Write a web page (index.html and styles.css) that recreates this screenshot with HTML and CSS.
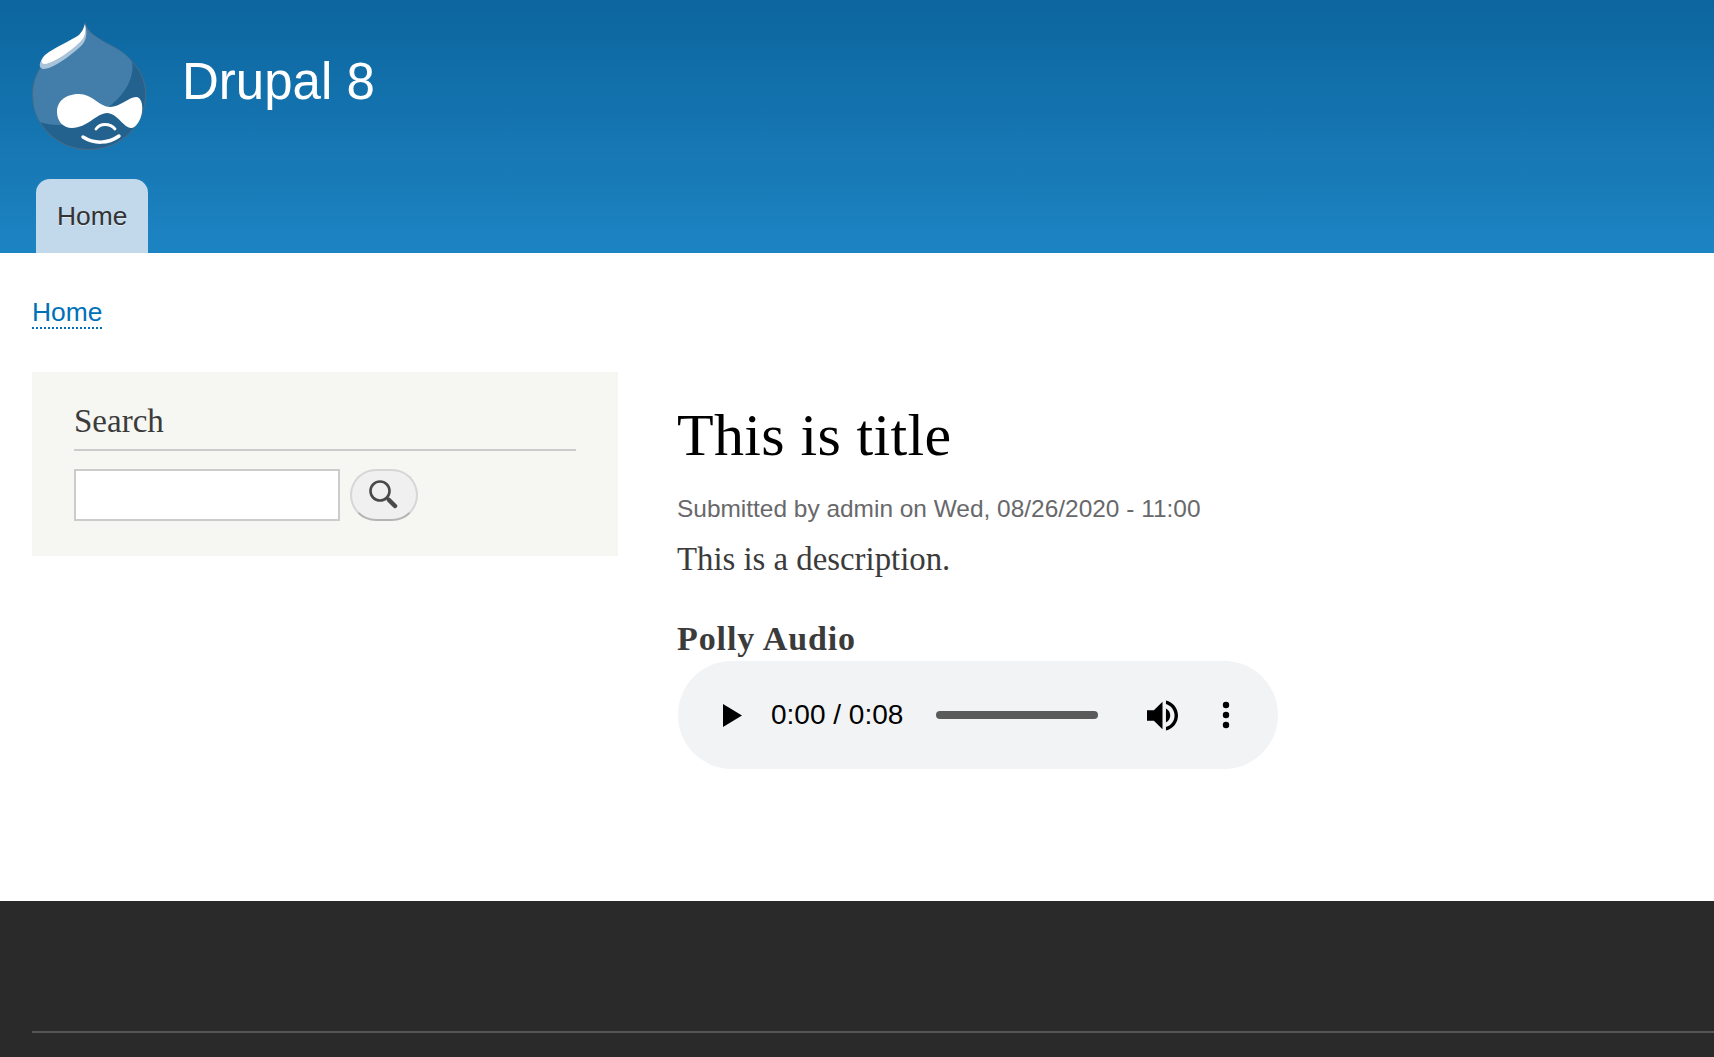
FILE: index.html
```html
<!DOCTYPE html>
<html lang="en">
<head>
<meta charset="utf-8">
<title>Drupal 8</title>
<link rel="stylesheet" href="styles.css">
</head>
<body>
<header class="site-header">
  <div class="branding">
    <svg class="logo" viewBox="0 0 114 128" width="114" height="128" aria-hidden="true">
      <path class="drop-dark" d="M53 1C55 10 66 17 78 23C98 33 113.500 50 113.500 72C113.500 103 89 127.500 57 127.500C25 127.500 .5 103 .5 72C.5 48 17 34 33 24C43 18 51 12 53 1Z"/>
      <path class="drop-light" d="M53 2C55 10 66 17 78 23C88 28 95 33 100 40C103 56 92 73 78 84C60 99 30 108 8 100C2 90 1 80 1 72C1 48 17 34 33 24C43 18 51 12 53 2Z"/>
      <path class="shine-back" d="M53 3C56 12 54 20 48 25C38 34 22 46 12 47C6 47 7 40 11 36C22 27 40 20 47 14C50 11 52 7 53 3Z"/>
      <path class="shine" d="M53 2C54 9 53 16 48 20C40 28 22 41 13 42C8 42 9 37 13 33C23 25 40 18 47 13C50 10 52 6 53 2Z"/>
      <path class="face" d="M25 90C25 78 35 72 47 72C60 72 68 85 78 85C88 85 97 75 104 75C109 75 111 82 110 90C109 98 104 106 99 106C92 106 85 91 75 91C65 91 55 106 40 106C31 106 25 99 25 90Z"/>
      <path class="mouth" d="M51 115C62 122 76 122 87 114"/>
      <path class="mouth-small" d="M64 107C68 101 78 101 83 107"/>
    </svg>
    <div class="site-name">Drupal 8</div>
  </div>
  <nav class="main-nav"><a class="tab" href="#">Home</a></nav>
</header>

<main class="page">
  <div class="breadcrumb"><a href="#">Home</a></div>
  <div class="columns">
    <aside class="sidebar">
      <h2 class="block-title">Search</h2>
      <form class="search-form">
        <input class="search-input" type="search" aria-label="Search">
        <button class="search-button" type="button" aria-label="Search">
          <svg viewBox="0 0 30 30" width="30" height="30" aria-hidden="true">
            <circle class="lens" cx="12" cy="12" r="9.500"/>
            <path class="handle-thin" d="M19 19L22 22"/>
            <path class="handle" d="M21 21L27 27"/>
          </svg>
        </button>
      </form>
    </aside>
    <article class="content">
      <h1 class="title">This is title</h1>
      <div class="meta">Submitted by admin on Wed, 08/26/2020 - 11:00</div>
      <p class="description">This is a description.</p>
      <div class="field-label">Polly Audio</div>
      <div class="player">
        <svg class="play" viewBox="0 0 19 23" width="19" height="23" aria-hidden="true"><path d="M0 0L19 11.500L0 23Z"/></svg>
        <span class="time">0:00 / 0:08</span>
        <div class="track"></div>
        <svg class="volume" viewBox="3 3 18 18" width="31" height="31" aria-hidden="true"><path d="M3 9v6h4l5 5V4L7 9H3zm13.500 3c0-1.770-1.020-3.290-2.500-4.030v8.050c1.480-.730 2.500-2.250 2.500-4.020zM14 3.230v2.060c2.890.860 5 3.540 5 6.710s-2.110 5.850-5 6.710v2.060c4.010-.910 7-4.490 7-8.770s-2.990-7.860-7-8.770z"/></svg>
        <svg class="more" viewBox="0 0 8 28" width="8" height="28" aria-hidden="true"><circle cx="4" cy="4" r="3.200"/><circle cx="4" cy="14" r="3.200"/><circle cx="4" cy="24" r="3.200"/></svg>
      </div>
    </article>
  </div>
</main>

<footer class="site-footer"><div class="footer-rule"></div></footer>
</body>
</html>
```
FILE: styles.css
```css
* { box-sizing: border-box; }

body {
  margin: 0;
  background: #fff;
  color: #3b3b3b;
  font-family: "Liberation Serif", serif;
}

.site-header {
  height: 253px;
  padding-top: 22px;
  background: linear-gradient(to bottom, #0c659e, #1d84c3);
}

.branding {
  display: flex;
  align-items: flex-start;
  padding-left: 32px;
}

.logo { display: block; flex: none; }
.drop-dark { fill: #23628f; stroke: #4d6b82; stroke-width: 1; }
.drop-light { fill: #437da9; }
.shine-back { fill: #a9c4da; }
.shine { fill: #fff; }
.face { fill: #fff; }
.mouth { fill: none; stroke: #fff; stroke-width: 3.500; stroke-linecap: round; }
.mouth-small { fill: none; stroke: #fff; stroke-width: 2.800; stroke-linecap: round; }

.site-name {
  margin: 30px 0 0 36px;
  color: #fff;
  font: 51px/60px "Liberation Sans", Arial, sans-serif;
}

.main-nav {
  display: flex;
  margin: 29px 0 0 36px;
}

.tab {
  display: block;
  height: 74px;
  padding: 0 21px;
  border-radius: 14px 14px 0 0;
  background: #c2d9ec;
  color: #333;
  font: 26.400px/74px "Liberation Sans", Arial, sans-serif;
  text-decoration: none;
  text-shadow: 0 1px 0 rgba(255, 255, 255, .5);
}

.page { padding: 43px 0 132px 32px; }

.breadcrumb {
  height: 32px;
  margin-bottom: 44px;
  font: 26.400px/32px "Liberation Sans", Arial, sans-serif;
}

.breadcrumb a {
  border-bottom: 2px dotted #0071b8;
  color: #0071b8;
  text-decoration: none;
}

.columns {
  display: flex;
  align-items: flex-start;
  gap: 59px;
}

.sidebar {
  flex: none;
  width: 586px;
  padding: 29px 42px 35px;
  background: #f6f6f2;
}

.block-title {
  margin: 0 0 18px;
  padding-bottom: 8px;
  border-bottom: 2px solid #ccc;
  font-size: 33px;
  font-weight: 400;
  line-height: 40px;
}

.search-form {
  display: flex;
  gap: 10px;
}

.search-input {
  width: 266px;
  height: 52px;
  padding: 0 8px;
  border: 2px solid #ccc;
  background: #fff;
  border-radius: 0;
  outline: none;
}

.search-button {
  display: flex;
  align-items: center;
  justify-content: center;
  width: 68px;
  height: 52px;
  padding: 0 2px 2px 0;
  border: 2px solid #d6d6d6;
  border-bottom-color: #b4b4b4;
  border-radius: 26px;
  background: #f0f0f0;
}

.lens { fill: none; stroke: #4a4a4a; stroke-width: 2.600; }
.handle-thin { fill: none; stroke: #4a4a4a; stroke-width: 2; }
.handle { fill: none; stroke: #4a4a4a; stroke-width: 4.500; stroke-linecap: round; }

.content { padding-top: 27px; }

.title {
  margin: 0 0 22px;
  color: #000;
  font-size: 60px;
  font-weight: 400;
  line-height: 72px;
  letter-spacing: .35px;
}

.meta {
  margin-bottom: 14px;
  color: #68686b;
  font: 24.450px/32px "Liberation Sans", Arial, sans-serif;
}

.description {
  margin: 0 0 40px;
  font-size: 32.800px;
  line-height: 40px;
}

.field-label {
  margin-bottom: 2px;
  font-size: 34px;
  font-weight: 700;
  line-height: 40px;
  letter-spacing: .9px;
}

.player {
  display: flex;
  align-items: center;
  width: 600px;
  height: 108px;
  margin-left: 1px;
  padding-left: 45px;
  border-radius: 54px;
  background: #f1f3f4;
  color: #000;
}

.play { display: block; flex: none; }

.time {
  margin-left: 29px;
  font: 28px/32px "Liberation Sans", Arial, sans-serif;
}

.track {
  flex: none;
  width: 162px;
  height: 8px;
  margin-left: 33px;
  border-radius: 4px;
  background: #5a5a5a;
}

.volume { display: block; flex: none; margin-left: 49px; }
.more { display: block; flex: none; margin-left: 44px; }

.site-footer {
  height: 156px;
  padding: 130px 0 0 32px;
  background: #2a2a2a;
}

.footer-rule {
  height: 2px;
  background: #555;
}
```
